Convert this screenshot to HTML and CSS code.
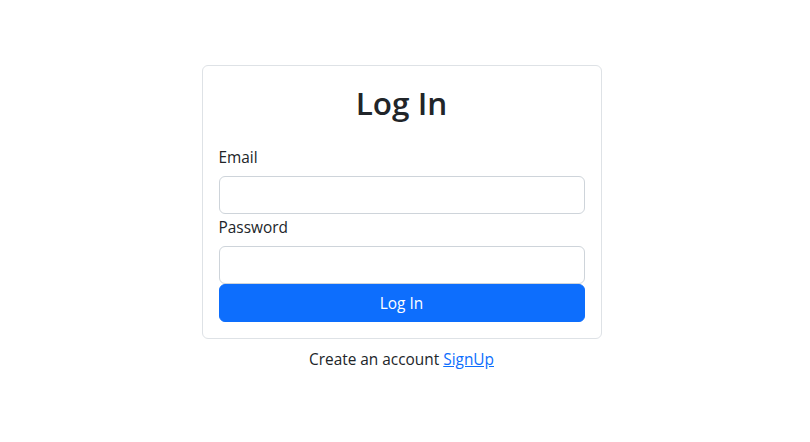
FILE: index.html
```html
<!DOCTYPE html>
<html>
<head>
<meta charset="utf-8">
<link rel="stylesheet" href="styles.css">
</head>
<body>
<div class="page">
  <div class="wrap">
    <div class="card">
      <h2 class="title">Log In</h2>
      <label class="label">Email</label>
      <input class="input" type="email">
      <label class="label">Password</label>
      <input class="input" type="password">
      <button class="btn">Log In</button>
    </div>
    <div class="footer">Create an account <a href="#" class="link">SignUp</a></div>
  </div>
</div>
</body>
</html>
```
FILE: styles.css
```css
* { box-sizing: border-box; }
html, body { margin: 0; padding: 0; background: #fff; }
body {
  font-family: "Open Sans", "Noto Sans", sans-serif;
  font-size: 15.4px;
  line-height: 24px;
  color: #212529;
}
.page {
  display: flex;
  justify-content: center;
  padding: 65px 7px 0 0;
}
.wrap { width: 400px; }
.card {
  display: flex;
  flex-direction: column;
  border: 1px solid #dee2e6;
  border-radius: 6px;
  padding: 16px;
}
.title {
  margin: 0 0 24px;
  padding-top: 2px;
  height: 38.4px;
  font-size: 31.5px;
  line-height: 38.4px;
  font-weight: 600;
  text-align: center;
  color: #212529;
}
.label {
  display: block;
  margin-bottom: 4px;
  line-height: 28px;
}
.input {
  display: block;
  width: 100%;
  height: 38px;
  border: 1px solid #ced4da;
  border-radius: 6px;
  padding: 6px 12px;
  font: inherit;
  background: #fff;
  margin: 0;
}
.btn {
  display: block;
  width: 100%;
  height: 38px;
  border: 1px solid #0d6efd;
  background: #0d6efd;
  color: #fff;
  border-radius: 6px;
  font: inherit;
  margin: 0;
  padding: 7px 12px 5px;
}
.footer {
  margin-top: 8px;
  line-height: 26px;
  text-align: center;
}
.link { color: #0d6efd; text-decoration: underline; }
```
